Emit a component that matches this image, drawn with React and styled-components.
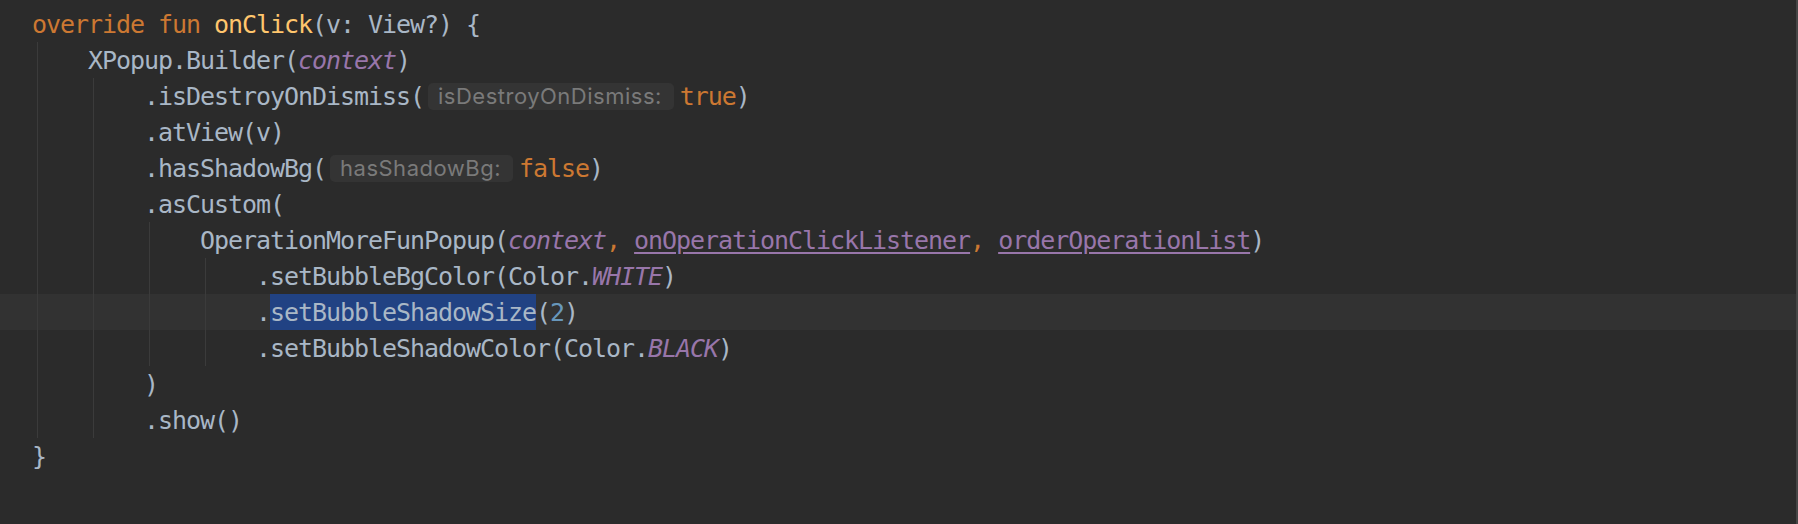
import React from 'react';
import styled, { createGlobalStyle, css } from 'styled-components';

const Global = createGlobalStyle`
  html, body {
    margin: 0;
    padding: 0;
    background: #2b2b2b;
  }
`;

const Editor = styled.div`
  box-sizing: border-box;
  width: 100%;
  height: 524px;
  padding-top: 6px;
  background: #2b2b2b;
  border-right: 2px solid #464646;
  overflow: hidden;
  font-family: "DejaVu Sans Mono", "Liberation Mono", monospace;
  font-size: 25px;
  letter-spacing: -1.05px;
  color: #a9b7c6;
`;

const Line = styled.div`
  display: flex;
  align-items: center;
  height: 36px;
  padding-left: 32px;
  white-space: pre;
  background: ${(p) => (p.$current ? '#323232' : 'transparent')};
`;

const IndentCell = styled.span`
  align-self: stretch;
  flex: 0 0 56px;
  ${(p) =>
    p.$guide &&
    css`
      background: linear-gradient(
        to right,
        transparent 5px,
        #3b3b3b 5px,
        #3b3b3b 6px,
        transparent 6px
      );
    `}
`;

const colors = {
  plain: '#a9b7c6',
  kw: '#cc7832',
  fn: '#ffc66d',
  field: '#9876aa',
  num: '#6897bb',
};

const Token = styled.span`
  color: ${(p) => colors[p.$kind] || colors.plain};
  font-style: ${(p) => (p.$italic ? 'italic' : 'normal')};
  ${(p) =>
    p.$underline &&
    css`
      text-decoration: underline;
      text-decoration-color: #9876aa;
      text-underline-offset: 3px;
    `}
`;

const Selected = styled.span`
  align-self: stretch;
  display: flex;
  align-items: center;
  background: #214283;
`;

const Hint = styled.span`
  display: inline-flex;
  align-items: center;
  height: 27px;
  margin: 0 6px 0 4px;
  padding: 0 12px 0 10px;
  border-radius: 5px;
  background: #343434;
  color: #7a7a7a;
  font-family: Inter, "Open Sans", sans-serif;
  font-size: 22px;
  letter-spacing: 0.5px;
`;

const p = (text) => ({ text });
const kw = (text) => ({ text, kind: 'kw' });
const it = (text) => ({ text, kind: 'field', italic: true });
const ul = (text) => ({ text, kind: 'field', underline: true });

const lines = [
  { indent: 0, guides: 0, tokens: [kw('override fun '), { text: 'onClick', kind: 'fn' }, p('(v: View?) {')] },
  { indent: 1, guides: 1, tokens: [p('XPopup.Builder('), it('context'), p(')')] },
  { indent: 2, guides: 2, tokens: [p('.isDestroyOnDismiss('), { hint: 'isDestroyOnDismiss:' }, kw('true'), p(')')] },
  { indent: 2, guides: 2, tokens: [p('.atView(v)')] },
  { indent: 2, guides: 2, tokens: [p('.hasShadowBg('), { hint: 'hasShadowBg:' }, kw('false'), p(')')] },
  { indent: 2, guides: 2, tokens: [p('.asCustom(')] },
  {
    indent: 3,
    guides: 3,
    tokens: [
      p('OperationMoreFunPopup('),
      it('context'),
      kw(','),
      p(' '),
      ul('onOperationClickListener'),
      kw(','),
      p(' '),
      ul('orderOperationList'),
      p(')'),
    ],
  },
  { indent: 4, guides: 4, tokens: [p('.setBubbleBgColor(Color.'), it('WHITE'), p(')')] },
  {
    indent: 4,
    guides: 4,
    current: true,
    tokens: [p('.'), { selected: 'setBubbleShadowSize' }, p('('), { text: '2', kind: 'num' }, p(')')],
  },
  { indent: 4, guides: 4, tokens: [p('.setBubbleShadowColor(Color.'), it('BLACK'), p(')')] },
  { indent: 2, guides: 2, tokens: [p(')')] },
  { indent: 2, guides: 2, tokens: [p('.show()')] },
  { indent: 0, guides: 0, tokens: [p('}')] },
];

function CodeLine({ line }) {
  const cells = [];
  for (let i = 0; i < line.indent; i++) {
    cells.push(<IndentCell key={'i' + i} $guide={i < line.guides} />);
  }
  return (
    <Line $current={line.current}>
      {cells}
      {line.tokens.map((t, i) => {
        if (t.hint) return <Hint key={i}>{t.hint}</Hint>;
        if (t.selected) return <Selected key={i}>{t.selected}</Selected>;
        return (
          <Token key={i} $kind={t.kind} $italic={t.italic} $underline={t.underline}>
            {t.text}
          </Token>
        );
      })}
    </Line>
  );
}

export default function App() {
  return (
    <>
      <Global />
      <Editor>
        {lines.map((line, i) => (
          <CodeLine key={i} line={line} />
        ))}
      </Editor>
    </>
  );
}
